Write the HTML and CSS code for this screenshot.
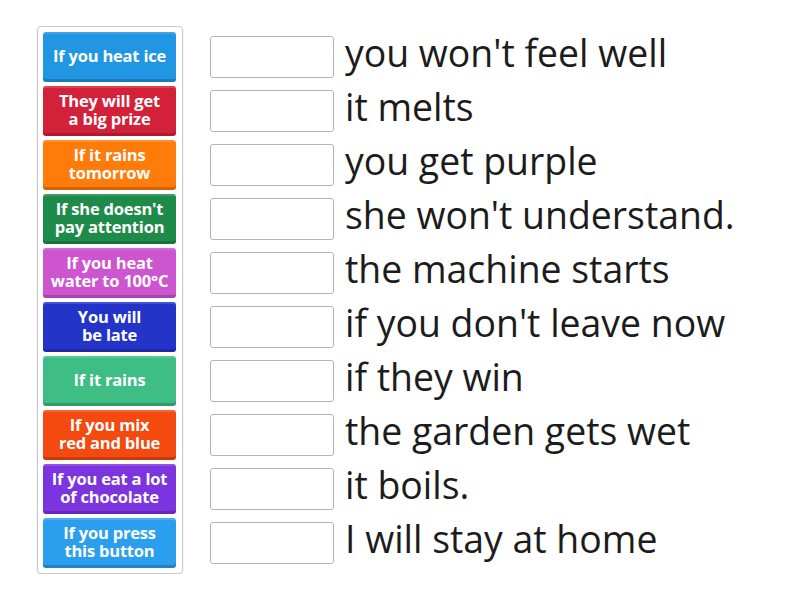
FILE: index.html
```html
<!DOCTYPE html>
<html lang="en">
<head>
    <meta charset="UTF-8">
    <title>Match up</title>
    <link rel="stylesheet" href="styles.css">
</head>
<body>
    <div class="game">
        <div class="tile-box">
            <div class="tile blue">If you heat ice</div>
            <div class="tile red">They will get<br>a big prize</div>
            <div class="tile orange">If it rains<br>tomorrow</div>
            <div class="tile green">If she doesn't<br>pay attention</div>
            <div class="tile pink">If you heat<br>water to 100°C</div>
            <div class="tile navy">You will<br>be late</div>
            <div class="tile mint">If it rains</div>
            <div class="tile rust">If you mix<br>red and blue</div>
            <div class="tile purple">If you eat a lot<br>of chocolate</div>
            <div class="tile sky">If you press<br>this button</div>
        </div>

        <!-- empty slots with the other half of each sentence -->
        <div class="rows">
            <div class="row"><div class="slot"></div><span class="clue">you won't feel well</span></div>
            <div class="row"><div class="slot"></div><span class="clue">it melts</span></div>
            <div class="row"><div class="slot"></div><span class="clue">you get purple</span></div>
            <div class="row"><div class="slot"></div><span class="clue">she won't understand.</span></div>
            <div class="row"><div class="slot"></div><span class="clue">the machine starts</span></div>
            <div class="row"><div class="slot"></div><span class="clue">if you don't leave now</span></div>
            <div class="row"><div class="slot"></div><span class="clue">if they win</span></div>
            <div class="row"><div class="slot"></div><span class="clue">the garden gets wet</span></div>
            <div class="row"><div class="slot"></div><span class="clue">it boils.</span></div>
            <div class="row"><div class="slot"></div><span class="clue">I will stay at home</span></div>
        </div>
    </div>
</body>
</html>
```

FILE: styles.css
```css
body {
    margin: 0;
    background: #ffffff;
    font-family: "Open Sans", "DejaVu Sans", sans-serif;
}

.game {
    display: flex;
    align-items: flex-start;
    padding: 26px 0 0 37px;
}

.tile-box {
    display: flex;
    flex-direction: column;
    gap: 4px;
    padding: 5px 6px 5px 5px;
    border: 1px solid #c8c8c8;
    border-radius: 4px;
    box-shadow: 0 1px 2px rgba(0, 0, 0, 0.12);
}

.tile {
    width: 133px;
    height: 50px;
    box-sizing: border-box;
    display: flex;
    align-items: center;
    justify-content: center;
    text-align: center;
    color: #ffffff;
    font-weight: 700;
    font-size: 16.5px;
    line-height: 18px;
    letter-spacing: -0.2px;
    border-radius: 3px;
    padding-bottom: 2px;
    box-shadow: inset 0 -3px 0 rgba(0, 0, 0, 0.18), inset 0 2px 0 rgba(255, 255, 255, 0.15);
}

.blue   { background: #2196e3; }
.red    { background: #d4213a; }
.orange { background: #ff7b0a; }
.green  { background: #1f8b4a; }
.pink   { background: #cd55d0; }
.navy   { background: #2434c8; }
.mint   { background: #3ebd85; }
.rust   { background: #f4490f; }
.purple { background: #7c34de; }
.sky    { background: #2b9fee; }

.rows {
    display: flex;
    flex-direction: column;
    gap: 4px;
    margin: 6px 0 0 27px;
}

.row {
    height: 50px;
    display: flex;
    align-items: center;
}

.slot {
    width: 124px;
    height: 42px;
    box-sizing: border-box;
    border: 1px solid #b4b4b4;
    border-radius: 3px;
    margin-right: 11px;
    margin-top: -1px;
}

.clue {
    font-size: 37.4px;
    color: #1c1c1c;
    white-space: nowrap;
    margin-bottom: 9px;
}
```
